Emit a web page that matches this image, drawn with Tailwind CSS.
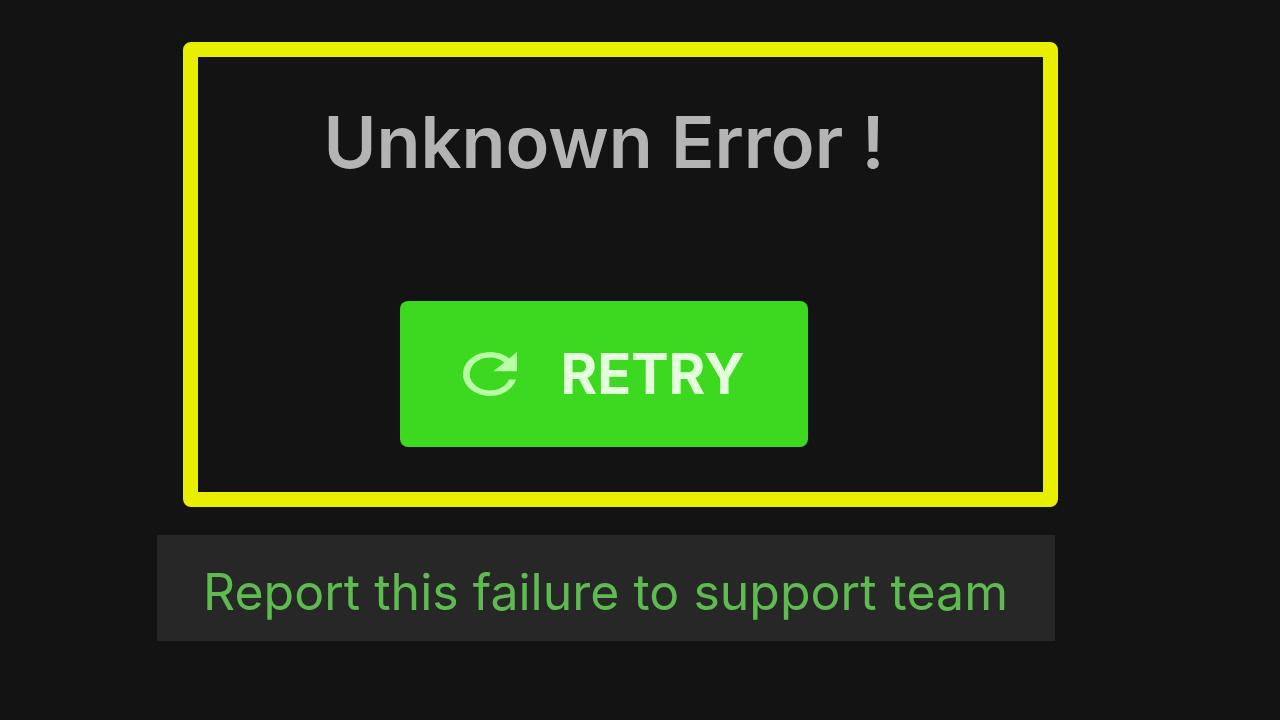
<!DOCTYPE html>
<html lang="en">

<head>
    <meta charset="UTF-8">
    <meta name="viewport" content="width=device-width, initial-scale=1.0">
    <title>Unknown Error</title>
    <script src="https://cdn.jsdelivr.net/npm/@tailwindcss/browser@4"></script>
</head>

<body class="bg-[#131313] min-h-screen font-[Inter,Roboto,sans-serif]">

    <div class="flex justify-center pt-[42px] pr-[66px]">
        <main class="w-full max-w-[901px]">

            <!-- Error box -->
            <section class="ml-[26px] flex flex-col items-center rounded-lg border-[15px] border-[#e8f000] pt-[45px] pr-8 pb-[45px]">
                <h1 class="text-[72px] leading-[80px] font-semibold text-[#b4b4b4] whitespace-nowrap">Unknown Error !</h1>

                <button type="button"
                    class="mt-[119px] flex items-center justify-center gap-[43px] h-[146px] w-[408px] rounded-lg bg-[#3dd820] text-[#e4ffdc] text-[56px] leading-[60px] font-bold cursor-pointer">
                    <svg class="w-[54px] h-[44px]" viewBox="4 4 16 16" preserveAspectRatio="none" fill="#b9ffa6" aria-hidden="true">
                        <path d="M17.65 6.35A7.96 7.96 0 0 0 12 4a8 8 0 1 0 7.73 10h-2.08A6 6 0 1 1 12 6c1.66 0 3.14.69 4.22 1.78L13 11h7V4l-2.35 2.35z" />
                    </svg>
                    RETRY
                </button>
            </section>

            <!-- Report link -->
            <a href="#"
                class="mt-7 mr-[3px] flex h-[106px] items-center justify-center bg-[#272727] pt-2 text-[50px] leading-[60px] text-[#5dbb50] whitespace-nowrap">Report this failure to support team</a>

        </main>
    </div>

</body>

</html>
